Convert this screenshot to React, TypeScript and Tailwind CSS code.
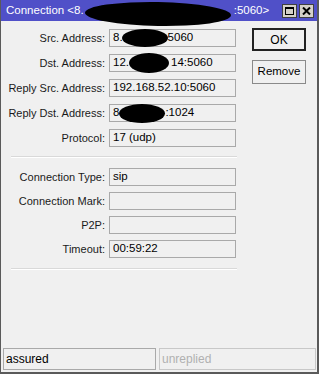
import React from "react";

type Row = { label: string; value: React.ReactNode };

const Blob = ({ w, h = 18, cls = "" }: { w: number; h?: number; cls?: string }) => (
  <span
    className={`inline-block bg-black rounded-[50%] align-middle ${cls}`}
    style={{ width: w, height: h }}
  />
);

const FieldRow = ({ label, value }: Row) => (
  <div className="flex items-center h-[18px]">
    <div className="w-[104px] text-right text-[11px] text-[#1a1a1a] whitespace-nowrap">{label}</div>
    <div className="ml-[4px] w-[127px] h-[18px] border border-[#a9a9a9] bg-[#f0f0f0] px-[3px] flex items-center text-[11.5px] text-black whitespace-nowrap overflow-visible">
      {value}
    </div>
  </div>
);

const Separator = () => (
  <div className="ml-[10px] w-[226px] h-[2px] border-t border-[#d9d9d9] border-b border-b-white" />
);

const App = () => {
  const top: Row[] = [
    { label: "Src. Address:", value: <>8.<Blob w={46} h={18} cls="-ml-[1px]" />5060</> },
    { label: "Dst. Address:", value: <>12.<Blob w={40} h={20} cls="mr-[2px]" />14:5060</> },
    { label: "Reply Src. Address:", value: "192.168.52.10:5060" },
    { label: "Reply Dst. Address:", value: <>8<Blob w={46} h={19} />:1024</> },
    { label: "Protocol:", value: "17 (udp)" },
  ];
  const bottom: Row[] = [
    { label: "Connection Type:", value: "sip" },
    { label: "Connection Mark:", value: "" },
    { label: "P2P:", value: "" },
    { label: "Timeout:", value: "00:59:22" },
  ];

  return (
    <div
      className="relative w-[319px] h-[374px] bg-[#f0f0f0] border-l border-r-2 border-b-2 border-[#5a5a5a] flex flex-col overflow-hidden"
      style={{ fontFamily: '"Liberation Sans", Arial, sans-serif' }}
    >
      {/* Title bar */}
      <div className="h-[21px] bg-[#5050c8] flex items-center pl-[5px] pr-[3px] relative">
        <span className="text-white text-[11.5px] whitespace-nowrap">Connection &lt;8.</span>
        <span className="w-[150px]" />
        <span className="text-white text-[11.5px] whitespace-nowrap">:5060&gt;</span>
        <div className="ml-auto flex gap-[2px]">
          <div className="w-[15px] h-[14px] bg-[#d4d0c8] border border-[#404040] flex items-center justify-center">
            <div className="w-[9px] h-[8px] border border-black border-t-2" />
          </div>
          <div className="w-[15px] h-[14px] bg-[#d4d0c8] border border-[#404040] flex items-center justify-center">
            <svg width="9" height="8" viewBox="0 0 9 8">
              <path d="M1 0.5 L8 7.5 M8 0.5 L1 7.5" stroke="#000" strokeWidth="2" />
            </svg>
          </div>
        </div>
        {/* redaction over title */}
        <div className="absolute left-[84px] top-[2px] w-[146px] h-[24px] bg-black rounded-[50%] rotate-[1deg]" />
      </div>

      {/* Body */}
      <div className="flex">
        <div className="flex flex-col">
          <div className="mt-[8px] flex flex-col gap-[7px]">
            {top.map((r) => (
              <FieldRow key={r.label} {...r} />
            ))}
          </div>
          <div className="mt-[9px]">
            <Separator />
          </div>
          <div className="mt-[10px] flex flex-col gap-[6px]">
            {bottom.map((r) => (
              <FieldRow key={r.label} {...r} />
            ))}
          </div>
          <div className="mt-[10px]">
            <Separator />
          </div>
        </div>

        <div className="ml-[15px] mt-[7px] flex flex-col gap-[9px]">
          <button className="w-[54px] h-[23px] border-2 border-[#222] bg-[#f0f0f0] text-[12px] text-black">
            OK
          </button>
          <button className="w-[54px] h-[24px] border border-[#8a8a8a] bg-[#f0f0f0] text-[11.5px] text-black">
            Remove
          </button>
        </div>
      </div>

      {/* Status bar */}
      <div className="mt-auto mb-[2px] flex gap-[3px] pl-[2px] pr-[1px]">
        <div className="w-[153px] h-[22px] border border-[#a9a9a9] px-[2px] flex items-center text-[12px] text-black">
          assured
        </div>
        <div className="w-[157px] h-[22px] border border-[#c8c8c8] px-[2px] flex items-center text-[12px] text-[#b0b0b0]">
          unreplied
        </div>
      </div>
    </div>
  );
};

export default App;
